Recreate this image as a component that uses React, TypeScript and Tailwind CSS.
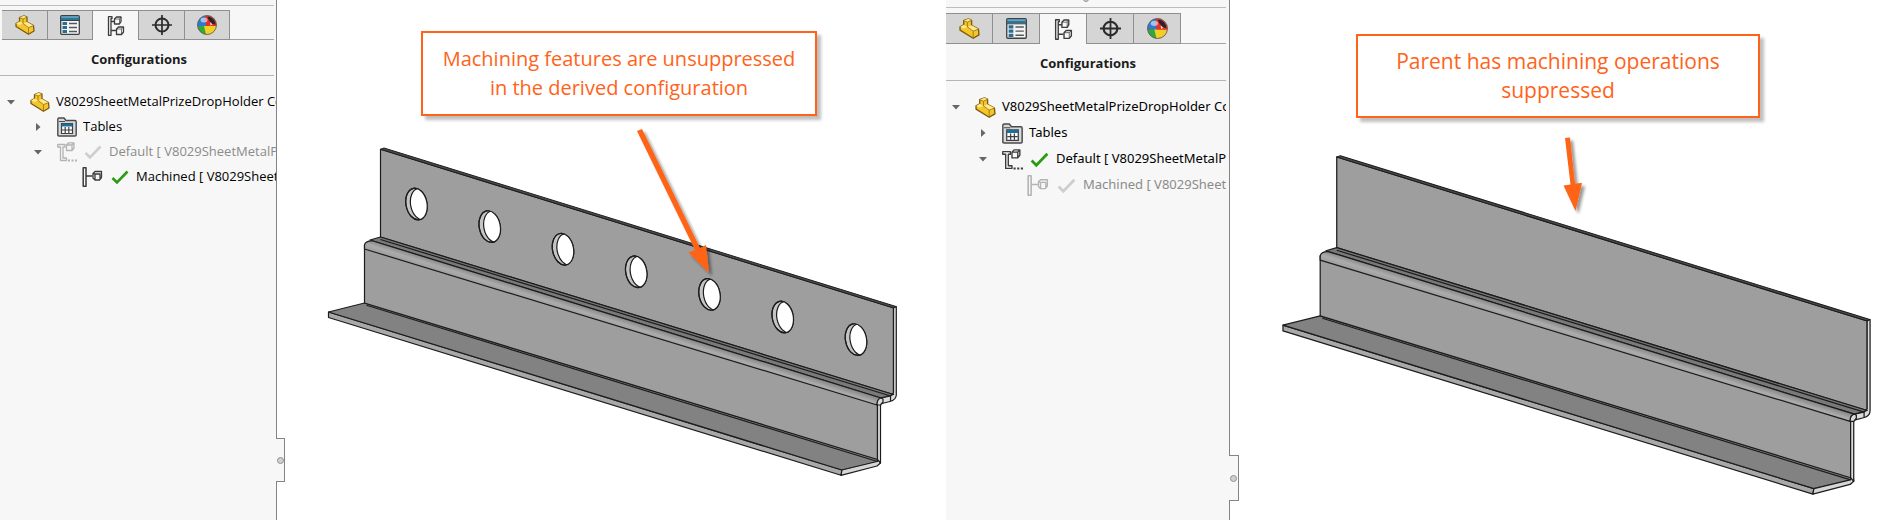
import type { ReactNode } from "react";
import clsx from "clsx";

type IconProps = { className?: string };

const PartIcon = ({ className }: IconProps) => (
  <svg viewBox="0 0 20 20" className={className} strokeLinejoin="round">
    <path d="M1 8.500 4.500 6.500 4.500 2.500 9 .8 12 2.200 12 7 18.500 10.500 19 16 13.500 19.300 1 11.500Z" fill="#f5c52c" stroke="#7d5a0c" strokeWidth="1.300" />
    <path d="M4.500 2.500 9 .8 12 2.200 8 4ZM8 8.500 12 7 18.500 10.500 13.500 12.800ZM1 8.500 4.500 6.500 8 8.500 4.500 10Z" fill="#ffe98a" />
    <path d="M4.500 2.500 8 4 12 2.200M8 4V8.500L13.500 12.500 19 10.500M13.500 12.500V19" fill="none" stroke="#95700f" strokeWidth=".8" />
  </svg>
);

const PropertiesIcon = ({ className }: IconProps) => (
  <svg viewBox="0 0 20 20" className={className}>
    <rect x=".7" y=".7" width="18.600" height="18.600" rx="1" fill="#f4f4f4" stroke="#3d4145" strokeWidth="1.300" />
    <path d="M1 1H19V5H1Z" fill="#2f7595" />
    <path d="M1.500 2H18.500" stroke="#8ac4dd" />
    <path d="M1 5.500H19" stroke="#3d4145" />
    <path d="M2.500 7h4.500v3h-4.500zM2.500 11h4.500v3h-4.500zM2.500 15h4.500v3h-4.500z" fill="#2b6d8e" />
    <path d="M9 8.500H17M9 12.500H17M9 16.500H17" stroke="#55595c" strokeWidth="1.400" />
  </svg>
);

const ConfigManagerIcon = ({ className }: IconProps) => (
  <svg viewBox="0 0 20 20" className={className} fill="#f7f7f7" stroke="#3c3c3c" strokeWidth="1.300" strokeLinejoin="round">
    <path d="M2.500 .7H6V2.500H5V19.300H2.500ZM5 5.500H9M5 14.500H10" />
    <path d="M8.500 3 10.500 1H15V5.500L13.500 8H8.500ZM10.500 13 12.500 11H17.500V16L15.500 18.500H10.500Z" />
    <path d="M8.500 3H13.500V8M13.500 3 15 1M10.500 13H15.500V18M15.500 13 17.500 11" fill="none" strokeWidth=".7" />
  </svg>
);

const TargetIcon = ({ className }: IconProps) => (
  <svg viewBox="0 0 20 20" className={className} fill="none" stroke="#2b2b2b" strokeWidth="2">
    <circle cx="10" cy="10" r="6.500" />
    <path d="M10 0V20M0 10H20" strokeWidth="1.700" />
  </svg>
);

const AppearanceIcon = ({ className }: IconProps) => (
  <svg viewBox="0 0 20 20" className={className}>
    <circle cx="10" cy="10" r="9.500" fill="#e3312c" />
    <path d="M10 11V.5A9.500 9.500 0 0 0 .5 11Z" fill="#2c7bd0" />
    <path d="M.5 11H10L9.500 19.500A9.500 9.500 0 0 1 .5 11Z" fill="#2fa83d" />
    <path d="M7 11H19.500A9.500 9.500 0 0 1 9 19.500Z" fill="#f2cf25" />
    <path d="M8 1 13 .8 19 7 19.400 11H9Z" fill="#e3312c" />
    <path d="M10.500 2C13 .5 18.500 5 18.500 9.500 15.500 10 11.500 6 10.500 2Z" fill="#262626" />
    <path d="M13 7 15.500 9.500 13.500 10.500Z" fill="#fff" opacity=".8" />
    <ellipse cx="7" cy="5" rx="3.500" ry="2.500" fill="#fff" opacity=".55" />
    <circle cx="10" cy="10" r="9.500" fill="none" stroke="#5b5b5b" strokeWidth=".8" />
  </svg>
);

const TablesIcon = ({ className }: IconProps) => (
  <svg viewBox="0 0 20 20" className={className}>
    <path d="M.8 18V2.500Q.8 1 2 1H7L9 3.500H18Q19.200 3.500 19.200 5V18Q19.200 19 18 19H2Q.8 19 .8 18Z" fill="#d9d9d9" stroke="#4b4b4b" strokeWidth="1.400" />
    <path d="M2 4.500H8" stroke="#4b4b4b" />
    <path d="M4.500 6.500H15.500V16.500H4.500Z" fill="#fff" stroke="#3d4145" strokeWidth="1.200" />
    <path d="M4.500 6.500H15.500V9.500H4.500Z" fill="#1f6d98" />
    <path d="M5 13H15M8.200 10V16M11.800 10V16" stroke="#3d4145" strokeWidth="1.200" />
  </svg>
);

const ConfigIcon = ({ className }: IconProps) => (
  <svg viewBox="0 0 20 20" className={className} fill="none" stroke="currentColor" strokeWidth="1.300" strokeLinejoin="round">
    <path d="M.7 2.500H8V5H6V16H9.500V18.500H3.500V5H.7Z" />
    <path d="M9.500 3 11.500 .8H17V6L15 8.500H9.500ZM9.500 3H15V8.500M15 3 17 .8" />
    <path d="M11 18.500h2M14.500 18.500h2M18 18.500h2" strokeWidth="2" />
  </svg>
);

const DerivedIcon = ({ className }: IconProps) => (
  <svg viewBox="1.5 0 20 20" overflow="visible" className={className} fill="none" stroke="currentColor" strokeWidth="1.300" strokeLinejoin="round">
    <path d="M.7 .7H3.500V19.300H.7ZM3.500 9H10" strokeWidth="1.500" />
    <path d="M10.500 6.500 12.500 4.500H19V10.500L17 13H12.500L10.500 11ZM12.500 7V13M12.500 7H17.500V12M12.500 7 10.500 6.500" />
  </svg>
);

const CheckIcon = ({ className }: IconProps) => (
  <svg viewBox="0 0 20 20" className={className} fill="none" stroke="currentColor" strokeWidth="2.600">
    <path d="M2.500 11 7 15.500 17.500 4.500" />
  </svg>
);

const tabs = [
  { label: "Feature manager", Icon: PartIcon },
  { label: "Property manager", Icon: PropertiesIcon },
  { label: "Configuration manager", Icon: ConfigManagerIcon },
  { label: "Dimension expert", Icon: TargetIcon },
  { label: "Display manager", Icon: AppearanceIcon },
];

type TreeItem = {
  label: string;
  depth: number;
  toggle?: "open" | "closed";
  Icon: (p: IconProps) => ReactNode;
  state?: "active" | "inactive";
};

const makeTree = (active: "parent" | "derived"): TreeItem[] => [
  { label: "V8029SheetMetalPrizeDropHolder Co", depth: 0, toggle: "open", Icon: PartIcon },
  { label: "Tables", depth: 1, toggle: "closed", Icon: TablesIcon },
  {
    label: "Default [ V8029SheetMetalP",
    depth: 1,
    toggle: "open",
    Icon: ConfigIcon,
    state: active === "parent" ? "active" : "inactive",
  },
  {
    label: "Machined [ V8029Sheet",
    depth: 2,
    Icon: DerivedIcon,
    state: active === "derived" ? "active" : "inactive",
  },
];

const indents = ["pl-0", "pl-[27px]", "pl-[54px]"];

const Sidebar = ({ large, active }: { large?: boolean; active: "parent" | "derived" }) => {
  const iconSize = large ? "size-[21px]" : "size-5";
  return (
    <aside
      className={clsx(
        "relative shrink-0 border-r border-[#848484] bg-[#f7f7f7] text-black",
        large ? "w-[284px] pr-[3px]" : "w-[277px] pr-[2px]"
      )}
    >
      <div className={clsx("overflow-hidden border-b border-[#bdbdbd]", large ? "h-2" : "h-1.5")}>
        {large && <div className="mx-auto -mt-1 size-1.5 rounded-full border border-[#999] bg-[#ccc]" />}
      </div>
      <div role="tablist" className={clsx("flex", large ? "mt-[5px] h-[31px]" : "mt-1 h-[30px] pl-0.5")}>
        {tabs.map(({ label, Icon }, i) => (
          <button
            key={label}
            role="tab"
            aria-label={label}
            aria-selected={i === 2}
            className={clsx(
              "flex items-center justify-center border-t border-r border-[#8f8f8f]",
              large ? "w-[47px]" : i === 1 || i === 4 ? "w-[45px]" : "w-[46px]",
              i === 2 ? "bg-[#f7f7f7]" : "border-b bg-[#d5d5d5]"
            )}
          >
            <Icon className={iconSize} />
          </button>
        ))}
        <div className="flex-1 border-b border-[#a3a3a3]" />
      </div>
      <h2
        className={clsx(
          "flex items-center justify-center border-b border-[#b5b5b5] pt-1 pl-1 text-[13px] font-bold text-[#1c1c1c]",
          large ? "h-[37px]" : "h-9"
        )}
      >
        Configurations
      </h2>
      <ul
        role="tree"
        className={clsx(
          "mt-3 overflow-hidden pt-px text-[13px]",
          large ? "pl-[5px] font-['Noto_Sans',sans-serif]" : "-mr-0.5 pl-1.5"
        )}
      >
        {makeTree(active).map(({ label, depth, toggle, Icon, state }) => (
          <li
            key={label}
            role="treeitem"
            className={clsx(
              "flex items-center gap-1.5 whitespace-nowrap",
              large ? "h-[26px]" : "h-[25px]",
              indents[depth],
              state === "inactive" && "text-[#8b8b8b]"
            )}
          >
            <button className="mr-2 flex h-4 w-2.5 shrink-0 items-center justify-center" aria-label={toggle ? `Toggle ${label}` : undefined} disabled={!toggle}>
              {toggle && (
                <svg viewBox="0 0 10 10" className="size-2.5" fill="#666">
                  <path d={toggle === "open" ? "M1 3H9L5 7.500Z" : "M3 1V9L7.500 5Z"} />
                </svg>
              )}
            </button>
            <Icon
              className={clsx(
                "shrink-0",
                iconSize,
                state === "inactive" && "text-[#b4b4b4]",
                state === "active" && "text-[#3c3c3c]"
              )}
            />
            {state && <CheckIcon className={clsx("shrink-0", iconSize, state === "active" ? "text-[#2c9a12]" : "text-[#cecece]")} />}
            <span>{label}</span>
          </li>
        ))}
      </ul>
      <div
        className={clsx(
          "absolute left-full z-10 flex items-center justify-center border border-l-0 border-[#848484] bg-[#f7f7f7]",
          large ? "top-[455px] h-[46px] w-2.5" : "top-[438px] h-11 w-[9px]"
        )}
      >
        <span className="size-[7px] shrink-0 rounded-full border border-[#909090] bg-[#d0d0d0]" />
      </div>
    </aside>
  );
};

const holes = [0, 1, 2, 3, 4, 5, 6].map((n) => ({ x: 416.5 + n * 73.25, y: 204 + n * 22.6 }));

const SheetMetalPart = ({ machined }: { machined?: boolean }) => (
  <g stroke="#1c1c1c" strokeWidth="1.200" strokeLinejoin="round">
    {/* bottom flange */}
    <path d="M328.500 312V317.500L841 475.300 842 470Z" fill="#a8a8a8" />
    <path d="M328.500 312 364.500 303 879 459.500 877 462 842 470Z" fill="#828282" />
    <path d="M842 470 877 461.500 880 458 880.500 463 877 466 841 475.300Z" fill="#d6d6d6" />
    {/* middle web */}
    <path d="M364.500 245 877.500 402V459.500L364.500 303Z" fill="#9e9e9e" />
    <path d="M877.500 404 880.500 402V463L877.500 459.500Z" fill="#dcdcdc" />
    <path d="M366.500 305.300 877.500 461.500" fill="none" />
    {/* upper flange */}
    <path d="M380.500 149.300 893.500 307.800V394.500L380.500 237Z" fill="#9e9e9e" />
    <path d="M380.500 149.300 384 148 896 306.500 893.500 308Z" fill="#4c4c4c" strokeWidth="1" />
    <path d="M893.500 308 896.300 306.500V395Q896 400 890 401.500L882 403.500 881 398 890.500 396 893.500 393Z" fill="#dcdcdc" />
    <path d="M890.500 396V401" />
    {/* bend */}
    <path d="M380.500 237 893.500 394.500 881 398 373 241 370 240Z" fill="#797979" />
    <path d="M380.500 239.500 889 395.500" fill="none" />
    <path d="M364.500 249V245Q365.500 240.500 373 241L881 398Q877 399 877 405Z" fill="url(#bend)" />
    <path d="M877 405Q877 399 881 398L883 399V402L880.500 405Z" fill="#dcdcdc" />
    {machined &&
      holes.map(({ x, y }, i) => (
        <g key={i} transform={`translate(${x} ${y}) rotate(-11)`}>
          <ellipse rx="10.500" ry="16" fill="#c4c4c4" />
          <ellipse cx="4.500" cy="1" rx="10.500" ry="16" fill="#fff" clipPath="url(#rim)" />
          <ellipse rx="10.500" ry="16" fill="none" />
        </g>
      ))}
  </g>
);

const Defs = () => (
  <defs>
    <linearGradient id="bend" gradientUnits="userSpaceOnUse" x1="600" y1="311" x2="597.200" y2="320">
      <stop offset="0" stopColor="#858585" />
      <stop offset=".6" stopColor="#acacac" />
      <stop offset="1" stopColor="#a1a1a1" />
    </linearGradient>
    <clipPath id="rim">
      <ellipse rx="10.500" ry="16" />
    </clipPath>
    <filter id="shadow" x="-50%" y="-20%" width="220%" height="150%">
      <feDropShadow dx="3" dy="3" stdDeviation="1.500" floodColor="#000" floodOpacity=".4" />
    </filter>
  </defs>
);

const Callout = ({ className, children }: { className: string; children: ReactNode }) => (
  <p
    className={clsx(
      "absolute border-2 border-[#ff6319] bg-white pt-[11px] text-center leading-[29px] text-[#ff6319] shadow-[4px_4px_3px_rgba(0,0,0,0.25)]",
      className
    )}
  >
    {children}
  </p>
);

const App = () => (
  <main className="grid min-h-screen grid-cols-[946fr_954fr] overflow-hidden bg-white font-['Open_Sans',sans-serif]">
    <section className="flex min-w-0">
      <Sidebar active="derived" />
      <div className="relative min-w-0 flex-1">
        <svg viewBox="277 0 669 520" className="block w-full" role="img" aria-label="Machined bracket">
          <Defs />
          <SheetMetalPart machined />
          <g filter="url(#shadow)" fill="#ff6319">
            <path d="M637 131 642 129 700 248 706 245 709 273 688.500 252.500 695 250Z" />
          </g>
        </svg>
        <Callout className="top-[31px] left-[144px] h-[85px] w-[396px] text-[20px]">
          Machining features are unsuppressed
          <br />
          in the derived configuration
        </Callout>
      </div>
    </section>
    <section className="flex min-w-0">
      <Sidebar large active="parent" />
      <div className="relative min-w-0 flex-1">
        <svg viewBox="1230 0 670 520" className="block w-full" role="img" aria-label="Bracket without machining">
          <g transform="translate(943.300 2.600) scale(1.034)">
            <SheetMetalPart />
          </g>
          <g filter="url(#shadow)" fill="#ff6319">
            <path d="M1565 138 1570 137.500 1575 183.500 1582 183 1575.500 211 1563.500 185.500 1570.500 184.500Z" />
          </g>
        </svg>
        <Callout className="top-[34px] left-[126px] h-[84px] w-[404px] text-[21px]">
          Parent has machining operations
          <br />
          suppressed
        </Callout>
      </div>
    </section>
  </main>
);

export default App;
